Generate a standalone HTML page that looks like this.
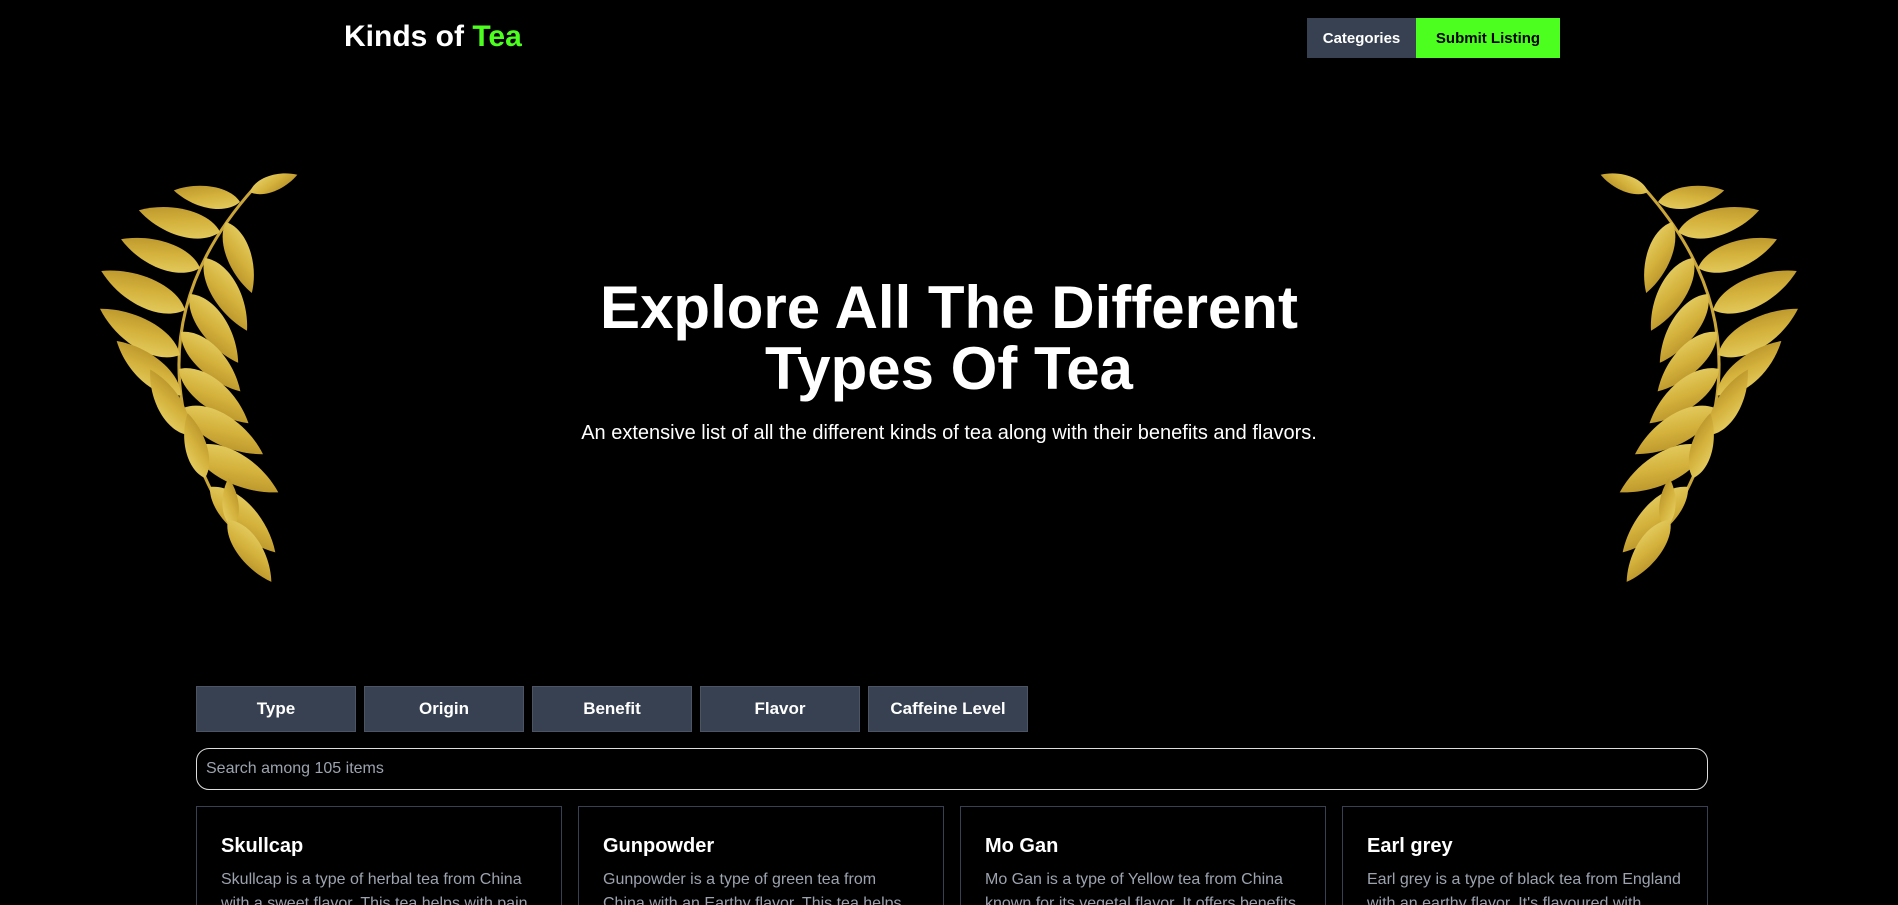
<!DOCTYPE html>
<html><head><meta charset="utf-8"><style>
*{margin:0;padding:0;box-sizing:border-box}
html,body{width:1898px;height:905px;overflow:hidden}
body{background:#000;font-family:"Liberation Sans",sans-serif;color:#fff;position:relative}
.logo{position:absolute;left:344px;top:20px;font-size:30px;font-weight:bold}
.logo span{color:#4cff1f}
.nav{position:absolute;left:1307px;top:18px;display:flex;height:40px;font-size:15px;font-weight:bold}
.nav div{display:flex;align-items:center;justify-content:center}
.cat{width:109px;background:#374151;color:#fff}
.sub{width:144px;background:#4cff1f;color:#000}
h1{position:absolute;left:0;width:1898px;top:277px;text-align:center;font-size:60px;line-height:61px;font-weight:bold}
.lead{position:absolute;left:0;width:1898px;top:422px;text-align:center;font-size:20px}
.filters{position:absolute;left:196px;top:686px;display:flex;gap:8px}
.filters div{width:160px;height:46px;background:#374151;border:1px solid #4b5563;display:flex;align-items:center;justify-content:center;font-size:17px;font-weight:bold}
.search{position:absolute;left:196px;top:748px;width:1512px;height:42px;border:1.5px solid #ddd;border-radius:13px;padding-left:9px;display:flex;align-items:center;font-size:16px;color:#9ca3af}
.cards{position:absolute;left:196px;top:806px;display:flex;gap:16px;height:99px;overflow:hidden}
.card{width:366px;height:140px;border:1px solid #374151;padding:28px 24px}
.card h3{font-size:20px;margin-bottom:10px}
.card p{font-size:16px;line-height:24px;color:#9ca3af}
svg{position:absolute;left:0;top:0}
</style></head><body>
<svg width="1898" height="905">
<defs>
<linearGradient id="g" x1="0" y1="0" x2="1" y2="1"><stop offset="0" stop-color="#e8d36a"/><stop offset="0.5" stop-color="#d4b23c"/><stop offset="1" stop-color="#b08a25"/></linearGradient>
<path id="lf" d="M0,0 C15,-19 55,-19 84,0 C55,17 15,17 0,0Z" fill="url(#g)"/>
<g id="br">
<path d="M254,188 Q100,360 262,570" stroke="#c9a53a" stroke-width="3" fill="none"/>
<use href="#lf" transform="translate(250,192) rotate(-20) scale(0.6)"/>
<use href="#lf" transform="translate(240,202) rotate(-170) scale(0.8)"/>
<use href="#lf" transform="translate(226,222) rotate(70) scale(0.9)"/>
<use href="#lf" transform="translate(220,232) rotate(-165)"/>
<use href="#lf" transform="translate(205,258) rotate(60)"/>
<use href="#lf" transform="translate(200,268) rotate(-160)"/>
<use href="#lf" transform="translate(190,294) rotate(55)"/>
<use href="#lf" transform="translate(185,310) rotate(-155) scale(1.1)"/>
<use href="#lf" transform="translate(181,332) rotate(45)"/>
<use href="#lf" transform="translate(180,355) rotate(-150) scale(1.1)"/>
<use href="#lf" transform="translate(179,369) rotate(38) scale(1.05)"/>
<use href="#lf" transform="translate(181,395) rotate(-140)"/>
<use href="#lf" transform="translate(183,408) rotate(30) scale(1.1)"/>
<use href="#lf" transform="translate(188,435) rotate(-120) scale(0.9)"/>
<use href="#lf" transform="translate(193,447) rotate(28) scale(1.15)"/>
<use href="#lf" transform="translate(205,478) rotate(-105) scale(0.8)"/>
<use href="#lf" transform="translate(210,487) rotate(45) scale(1.1)"/>
<use href="#lf" transform="translate(233,528) rotate(-95) scale(0.6)"/>
<use href="#lf" transform="translate(228,520) rotate(55) scale(0.9)"/>
</g>
</defs>
<use href="#br"/>
<use href="#br" transform="translate(1898,0) scale(-1,1)"/>
</svg>
<div class="logo">Kinds of <span>Tea</span></div>
<div class="nav"><div class="cat">Categories</div><div class="sub">Submit Listing</div></div>
<h1>Explore All The Different<br>Types Of Tea</h1>
<div class="lead">An extensive list of all the different kinds of tea along with their benefits and flavors.</div>
<div class="filters"><div>Type</div><div>Origin</div><div>Benefit</div><div>Flavor</div><div>Caffeine Level</div></div>
<div class="search">Search among 105 items</div>
<div class="cards">
<div class="card"><h3>Skullcap</h3><p>Skullcap is a type of herbal tea from China with a sweet flavor. This tea helps with pain</p></div>
<div class="card"><h3>Gunpowder</h3><p>Gunpowder is a type of green tea from China with an Earthy flavor. This tea helps</p></div>
<div class="card"><h3>Mo Gan</h3><p>Mo Gan is a type of Yellow tea from China known for its vegetal flavor. It offers benefits</p></div>
<div class="card"><h3>Earl grey</h3><p>Earl grey is a type of black tea from England with an earthy flavor. It's flavoured with</p></div>
</div>
</body></html>
